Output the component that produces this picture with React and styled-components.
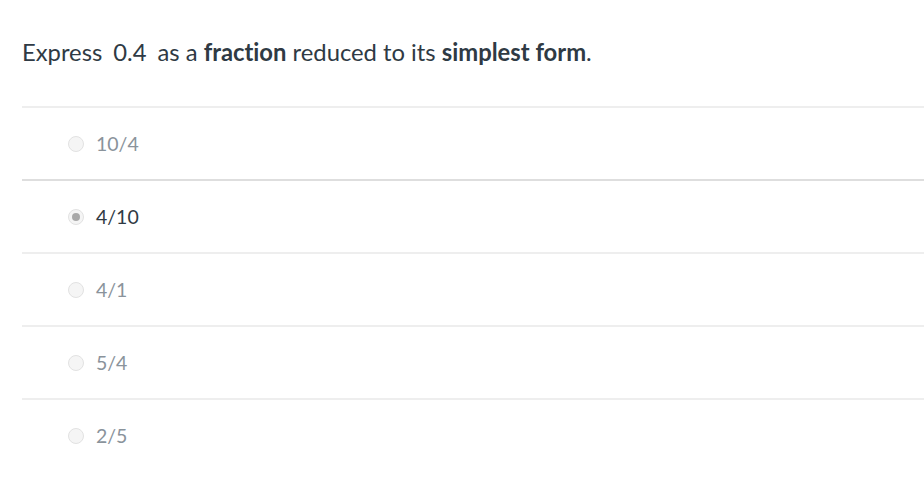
import styled, { createGlobalStyle } from "styled-components";

const GlobalStyle = createGlobalStyle`
  html, body {
    margin: 0;
    padding: 0;
    background: #fff;
  }
  body {
    font-family: Lato, "Open Sans", "Liberation Sans", sans-serif;
    -webkit-font-smoothing: antialiased;
    font-variant-ligatures: none;
  }
`;

const options = [
  { id: "a", label: "10/4" },
  { id: "b", label: "4/10", selected: true },
  { id: "c", label: "4/1" },
  { id: "d", label: "5/4" },
  { id: "e", label: "2/5" },
];

const App = () => {
  return (
    <>
      <GlobalStyle />
      <Question>
        <Prompt>
          Express<MathValue>0.4</MathValue>as a <strong>fraction</strong> reduced
          to its <strong>simplest form</strong>.
        </Prompt>
        <Choices>
          {options.map((opt, i) => (
            <Choice key={opt.id} $dark={i === 1}>
              <Radio $checked={opt.selected} />
              <Label $checked={opt.selected}>{opt.label}</Label>
            </Choice>
          ))}
        </Choices>
      </Question>
    </>
  );
};

const Question = styled.div`
  padding: 36px 0 0 22px;
`;

const Prompt = styled.p`
  margin: 0 0 38px;
  font-size: 23.8px;
  line-height: 32px;
  color: #2f3a44;
  letter-spacing: 0;
  font-variant-ligatures: none;
  strong {
    font-weight: 700;
  }
`;

const MathValue = styled.span`
  margin: 0 11px 0 11px;
`;

const Choices = styled.div`
  display: flex;
  flex-direction: column;
`;

const Choice = styled.label`
  display: flex;
  align-items: center;
  height: 71px;
  border-top: 2px solid ${(p) => (p.$dark ? "#dedede" : "#eeeeee")};
  padding-left: 46px;
  cursor: pointer;
`;

const Radio = styled.span`
  position: relative;
  width: 14px;
  height: 14px;
  border-radius: 50%;
  border: 1px solid #e2e2e2;
  background: #f5f5f5;
  flex-shrink: 0;
  &::after {
    content: "";
    display: ${(p) => (p.$checked ? "block" : "none")};
    position: absolute;
    left: 3px;
    top: 3px;
    width: 8px;
    height: 8px;
    border-radius: 50%;
    background: #a9a9a9;
  }
`;

const Label = styled.span`
  margin-left: 12px;
  font-size: 19.5px;
  color: ${(p) => (p.$checked ? "#2f3a44" : "#8a939b")};
`;

export default App;
